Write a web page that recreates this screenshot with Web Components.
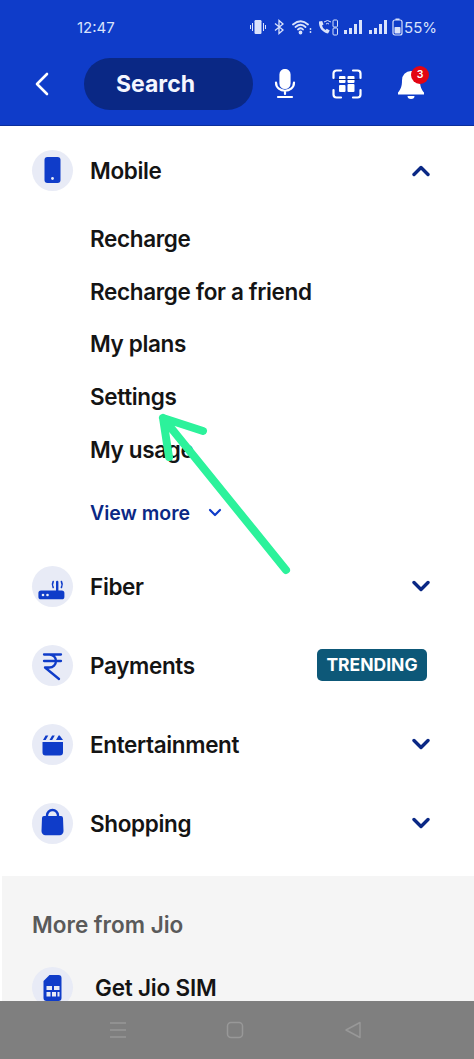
<!DOCTYPE html>
<html lang="en">
<head>
<meta charset="utf-8">
<title>Jio menu</title>
<style>
  html, body { margin: 0; padding: 0; background: #fff; }
  body { width: 474px; height: 1059px; overflow: hidden; font-family: Inter, "Liberation Sans", sans-serif; }
  jio-app { height: 1059px; }
</style>
</head>
<body>
<jio-app>
  <jio-header slot="header"></jio-header>
  <jio-menu-row label="Mobile" icon="mobile" chevron="up"></jio-menu-row>
  <jio-submenu>
    <jio-subitem>Recharge</jio-subitem>
    <jio-subitem>Recharge for a friend</jio-subitem>
    <jio-subitem>My plans</jio-subitem>
    <jio-subitem>Settings</jio-subitem>
    <jio-subitem>My usage</jio-subitem>
    <jio-view-more></jio-view-more>
  </jio-submenu>
  <jio-menu-row label="Fiber" icon="fiber" chevron="down"></jio-menu-row>
  <jio-menu-row label="Payments" icon="payments" badge="TRENDING"></jio-menu-row>
  <jio-menu-row label="Entertainment" icon="entertainment" chevron="down"></jio-menu-row>
  <jio-menu-row label="Shopping" icon="shopping" chevron="down"></jio-menu-row>
  <jio-more></jio-more>
  <jio-nav slot="nav"></jio-nav>
</jio-app>

<script>
const ICONS = {
  mobile: `<rect x="12.5" y="7" width="16" height="26" rx="3" fill="#0f3cc9"/><circle cx="20.5" cy="28.5" r="1.4" fill="#e8ebf6"/>`,
  fiber: `<path d="M9 24.5h15v-8.5a1.2 1.2 0 0 1 2.4 0v8.5h3.4a2.6 2.6 0 0 1 2.6 2.6v3.6a2.6 2.6 0 0 1-2.6 2.6H9a2.6 2.6 0 0 1-2.6-2.6v-3.6a2.6 2.6 0 0 1 2.6-2.6z" fill="#0f3cc9"/>
    <path d="M21.2 15.5q-1.6 3 0 6M29.4 15.5q1.6 3 0 6" fill="none" stroke="#0f3cc9" stroke-width="1.6" stroke-linecap="round"/>
    <circle cx="11" cy="29" r="1.3" fill="#e8ebf6"/><circle cx="15.5" cy="29" r="1.3" fill="#e8ebf6"/>`,
  payments: `<path d="M12 9.5h17M12 16h17M13 9.5h4.5a6.5 6.5 0 0 1 0 13H13L27 34" fill="none" stroke="#0f3cc9" stroke-width="2.3" stroke-linecap="round" stroke-linejoin="round"/>`,
  entertainment: `<path d="M10.5 18h20.5v10.5a3 3 0 0 1-3 3H13.5a3 3 0 0 1-3-3z" fill="#0f3cc9"/>
    <path d="M11 16l2.6-4.5h2.7L13.7 16zM17.5 16l2.6-4.5h2.7L20.2 16zM24 16l2.6-4.5h1.1L31 16z" fill="#0f3cc9"/>`,
  shopping: `<path d="M15 14v-1.5a5.5 5.5 0 0 1 11 0V14" fill="none" stroke="#0f3cc9" stroke-width="2.4"/>
    <path d="M12 13h17a2 2 0 0 1 2 1.9l.5 13.1a4 4 0 0 1-4 4.200H13.5a4 4 0 0 1-4-4.200l.5-13.1a2 2 0 0 1 2-1.9z" fill="#0f3cc9"/>`
};

class JioApp extends HTMLElement {
  constructor() {
    super();
    this.attachShadow({ mode: "open" }).innerHTML = `
      <style>
        :host { display: flex; flex-direction: column; position: relative; width: 474px; overflow: hidden; }
        main { flex: 1; min-height: 0; overflow: hidden; background: #fff; padding-top: 24px; }
        svg { position: absolute; left: 0; top: 0; pointer-events: none; }
      </style>
      <slot name="header"></slot>
      <main><slot></slot></main>
      <slot name="nav"></slot>
      <svg width="474" height="1059" viewBox="0 0 474 1059" fill="none" stroke="#2cf29b" stroke-width="8" stroke-linecap="round" stroke-linejoin="round">
        <path d="M286 570 163 418M163 418 203 431M163 418 169 457"/>
      </svg>`;
  }
}

class JioHeader extends HTMLElement {
  constructor() {
    super();
    this.attachShadow({ mode: "open" }).innerHTML = `
      <style>
        :host { display: block; height: 126px; box-sizing: border-box; background: #0f3cc9; color: #fff; border-bottom: 1px solid #0b2f9c; }
        .status { display: flex; align-items: center; height: 58px; padding: 0 37px 4px 77px; box-sizing: border-box; font: 400 15px Inter, sans-serif; color: #d9e2fb; }
        .status .time { flex: 1; }
        .status .icons { display: flex; align-items: center; gap: 5px; }
        .status svg { display: block; }
        .bar { display: flex; align-items: center; height: 52px; padding-left: 35px; }
        .back { width: 49px; }
        .search { display: flex; align-items: center; width: 169px; height: 52px; border-radius: 26px; background: #0a2885; padding-left: 32px; box-sizing: border-box; font: 700 23px Inter, sans-serif; color: #f4f6ff; }
        .acts { display: flex; align-items: center; margin-left: 21px; gap: 36px; }
        .bell { position: relative; width: 30px; height: 32px; margin-left: -2px; }
        .badge { position: absolute; left: 15px; top: -2px; width: 18px; height: 18px; border-radius: 50%; background: #e30513; color: #fff; font: 600 10.5px/18px Inter, sans-serif; text-align: center; }
      </style>
      <div class="status">
        <span class="time">12:47</span>
        <div class="icons">
          <svg width="16" height="18" viewBox="0 0 16 18" fill="#d9e2fb"><rect x="4.5" y="2" width="7" height="14" rx="1.2"/><path d="M2.5 5v8M13.5 5v8M.5 7v4M15.5 7v4" stroke="#d9e2fb" stroke-width="1"/></svg>
          <svg width="10" height="16" viewBox="0 0 10 16" fill="none" stroke="#d9e2fb" stroke-width="1.3" style="margin-left:3px"><path d="M1 4.5l8 6.5-4 3.5V1.5l4 3.5-8 6.5"/></svg>
          <svg width="20" height="16" viewBox="0 0 20 16" fill="none" stroke="#d9e2fb" stroke-width="1.8" stroke-linecap="round" style="margin-left:3px"><path d="M1 5.500q8-6.500 15 0M3.500 8q5.500-4.500 10 0M6 10.500q3-2.500 5 0"/><circle cx="8.5" cy="13.5" r="1" fill="#d9e2fb"/><path d="M18.5 10v.1M18.5 13v.1"/></svg>
          <svg width="22" height="17" viewBox="0 0 22 17" fill="none"><path d="M2 2.500c-.5 6 3.500 11 9 12l1.800-3-3-1.800-1.300 1.200Q5.500 9.500 5 6.500l1.500-1L5.200 2z" fill="#d9e2fb"/><path d="M7 3q3.500-3 7 0M9 5q1.500-1.300 3 0" stroke="#d9e2fb"/><rect x="16" y="1" width="4.5" height="7" rx="1" stroke="#d9e2fb"/><rect x="16" y="9" width="4.5" height="7" rx="1" stroke="#d9e2fb"/></svg>
          <svg width="18" height="14" viewBox="0 0 18 14" fill="#d9e2fb"><rect x="0" y="10" width="3" height="4"/><rect x="5" y="8" width="3" height="6"/><rect x="10" y="4" width="3" height="10"/><rect x="15" y="0" width="3" height="14"/></svg>
          <svg width="18" height="14" viewBox="0 0 18 14" fill="#d9e2fb" style="margin-left:2px"><rect x="0" y="10" width="3" height="4"/><rect x="5" y="8" width="3" height="6"/><rect x="10" y="4" width="3" height="10"/><rect x="15" y="0" width="3" height="14"/></svg>
          <svg width="11" height="18" viewBox="0 0 11 18" fill="none"><rect x="1" y="2" width="9" height="15" rx="2" stroke="#d9e2fb" stroke-width="1.2"/><rect x="3.5" y="0.5" width="4" height="1.5" fill="#d9e2fb"/><rect x="2.5" y="9" width="6" height="6.5" rx=".8" fill="#d9e2fb"/></svg>
          <span style="margin-left:-4px">55%</span>
        </div>
      </div>
      <div class="bar">
        <div class="back"><svg width="14" height="24" viewBox="0 0 14 24" fill="none" stroke="#fff" stroke-width="2.6" stroke-linecap="round" stroke-linejoin="round" style="display:block"><path d="M12 2 2 12l10 10"/></svg></div>
        <div class="search">Search</div>
        <div class="acts">
          <svg width="22" height="30" viewBox="0 0 22 30" fill="none" stroke="#fff" stroke-width="2.2" stroke-linecap="round"><rect x="6.5" y="1" width="9" height="18" rx="4.5" fill="#fff"/><path d="M2 13.500c0 11 18 11 18 0M11 23v2M4 28h14"/></svg>
          <svg width="30" height="30" viewBox="0 0 30 30" fill="none" stroke="#fff" stroke-width="2.2" stroke-linecap="round" stroke-linejoin="round"><path d="M1.500 9V4.500a3 3 0 0 1 3-3H9M21 1.500h4.500a3 3 0 0 1 3 3V9M28.500 21v4.500a3 3 0 0 1-3 3H21M9 28.500H4.500a3 3 0 0 1-3-3V21"/><g fill="#fff" stroke="none"><rect x="7" y="7" width="6.5" height="7" rx="1"/><rect x="15.5" y="7" width="7" height="7" rx="1"/><rect x="7" y="16" width="6.5" height="7" rx="1"/><rect x="15.5" y="15" width="7" height="8" rx="1"/></g><path d="M3 10.500h24" stroke="#0a2885" stroke-width="1"/></svg>
          <div class="bell">
            <svg width="30" height="32" viewBox="0 0 30 32" fill="#fff"><path d="M15 3a9 9 0 0 0-9 9.500c0 6.500-1.500 9-4 12v2h26v-2c-2.500-3-4-5.500-4-12A9 9 0 0 0 15 3z"/><path d="M11.500 28h7a3.500 3 0 0 1-7 0z"/></svg>
            <div class="badge">3</div>
          </div>
        </div>
      </div>`;
  }
}

class JioMenuRow extends HTMLElement {
  constructor() {
    super();
    const icon = this.getAttribute("icon");
    const chevron = this.getAttribute("chevron");
    const badge = this.getAttribute("badge");
    let end = "";
    if (chevron) {
      const d = chevron === "up" ? "M2 10.500 9 3.500l7 7" : "M2 3.500l7 7 7-7";
      end = `<svg class="chev" width="18" height="14" viewBox="0 0 18 14" fill="none" stroke="#0a2885" stroke-width="3.4" stroke-linecap="round" stroke-linejoin="round"><path d="${d}"/></svg>`;
    }
    if (badge) end = `<span class="badge">${badge}</span>`;
    this.attachShadow({ mode: "open" }).innerHTML = `
      <style>
        :host { display: flex; align-items: center; height: 41px; padding: 0 44px 0 32px; margin-bottom: 38px; color: #141414; }
        .ico { flex: none; width: 41px; height: 41px; border-radius: 50%; background: #e8ebf6; }
        .ico svg { display: block; }
        .label { flex: 1; margin-left: 17px; font: 600 22.5px Inter, sans-serif; letter-spacing: -.35px; }
        .chev { flex: none; }
        .badge { flex: none; margin-right: 3px; width: 110px; height: 32px; box-sizing: border-box; border-radius: 5px; background: #0d5878; color: #fff; font: 700 17.5px/32px Inter, sans-serif; text-align: center; }
      </style>
      <div class="ico"><svg width="41" height="41" viewBox="0 0 41 41">${ICONS[icon]}</svg></div>
      <div class="label">${this.getAttribute("label")}</div>
      ${end}`;
  }
}

class JioSubmenu extends HTMLElement {
  constructor() {
    super();
    this.attachShadow({ mode: "open" }).innerHTML = `
      <style>:host { display: block; padding: 0 0 0 90px; margin-top: -17px; margin-bottom: 27px; }</style>
      <slot></slot>`;
  }
}

class JioSubitem extends HTMLElement {
  constructor() {
    super();
    this.attachShadow({ mode: "open" }).innerHTML = `
      <style>:host { display: flex; align-items: center; height: 52.75px; font: 600 22.5px Inter, sans-serif; letter-spacing: -.35px; color: #141414; }</style>
      <slot></slot>`;
  }
}

class JioViewMore extends HTMLElement {
  constructor() {
    super();
    this.attachShadow({ mode: "open" }).innerHTML = `
      <style>:host { display: flex; align-items: center; gap: 18px; height: 52px; margin-top: 11px; font: 600 19.5px Inter, sans-serif; color: #0a2885; }</style>
      <span>View more</span>
      <svg width="14" height="10" viewBox="0 0 14 10" fill="none" stroke="#0f3cc9" stroke-width="2.2" stroke-linecap="round" stroke-linejoin="round"><path d="M2 2l5 5 5-5"/></svg>`;
  }
}

class JioMore extends HTMLElement {
  constructor() {
    super();
    this.attachShadow({ mode: "open" }).innerHTML = `
      <style>
        :host { display: block; margin: -6px 0 0 2px; height: 200px; padding: 36px 0 0 30px; box-sizing: border-box; background: #f5f5f5; }
        h2 { margin: 0; font: 600 22.5px/26px Inter, sans-serif; color: #5a5a5a; }
        .row { display: flex; align-items: center; margin-top: 29px; }
        .ico { flex: none; width: 41px; height: 41px; border-radius: 50%; background: #e8ebf6; }
        .ico svg { display: block; }
        span { margin-left: 22px; font: 600 22.5px Inter, sans-serif; letter-spacing: -.2px; color: #141414; }
      </style>
      <h2>More from Jio</h2>
      <div class="row">
        <div class="ico"><svg width="41" height="41" viewBox="0 0 41 41">
          <path d="M17.5 8h9a3 3 0 0 1 3 3v20a3 3 0 0 1-3 3h-12a3 3 0 0 1-3-3V14z" fill="#0f3cc9"/>
          <g fill="#e8ebf6"><rect x="14.5" y="19" width="5.5" height="4"/><rect x="22" y="19" width="5.5" height="4"/><rect x="14.5" y="25" width="4" height="4.5"/><rect x="20" y="25" width="4" height="4.5"/><rect x="25.5" y="25" width="2" height="4.5"/></g>
        </svg></div>
        <span>Get Jio SIM</span>
      </div>`;
  }
}

class JioNav extends HTMLElement {
  constructor() {
    super();
    this.attachShadow({ mode: "open" }).innerHTML = `
      <style>
        :host { display: flex; align-items: center; position: relative; height: 58px; background: #7f7f7f; padding: 0 0 0 109px; box-sizing: border-box; gap: 100px; flex: none; }
        svg { display: block; }
      </style>
      <svg width="18" height="18" viewBox="0 0 18 18" stroke="#989898" stroke-width="1.5"><path d="M1 2h16M1 9h16M1 16h16"/></svg>
      <svg width="18" height="18" viewBox="0 0 18 18" fill="none" stroke="#989898" stroke-width="1.5" style="margin-left:-1px"><rect x="1.5" y="1.5" width="15" height="15" rx="3.5"/></svg>
      <svg width="18" height="18" viewBox="0 0 18 18" fill="none" stroke="#989898" stroke-width="1.5" stroke-linejoin="round"><path d="M16 1.500v15L2 9z"/></svg>`;
  }
}

customElements.define("jio-app", JioApp);
customElements.define("jio-header", JioHeader);
customElements.define("jio-menu-row", JioMenuRow);
customElements.define("jio-submenu", JioSubmenu);
customElements.define("jio-subitem", JioSubitem);
customElements.define("jio-view-more", JioViewMore);
customElements.define("jio-more", JioMore);
customElements.define("jio-nav", JioNav);
</script>
</body>
</html>
